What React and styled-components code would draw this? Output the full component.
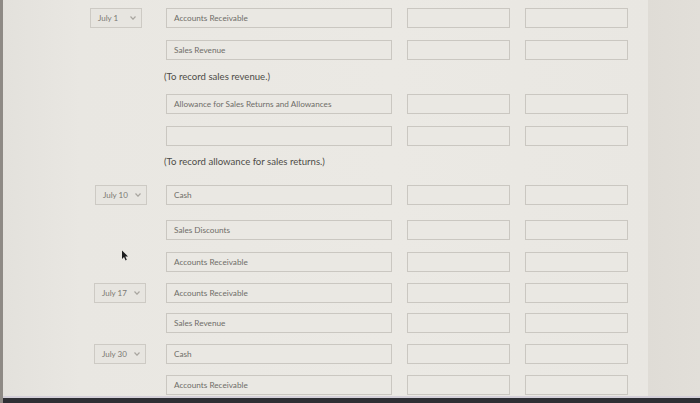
import React from "react";
import styled, { createGlobalStyle } from "styled-components";

const GlobalStyle = createGlobalStyle`
  html, body {
    margin: 0;
    padding: 0;
    background: #e6e4df;
  }
  * {
    box-sizing: border-box;
  }
`;

const Screen = styled.div`
  position: relative;
  width: 700px;
  height: 403px;
  overflow: hidden;
  display: grid;
  grid-template-columns: 645px 1fr;
  grid-template-rows: 1fr 7px;
  font-family: Lato, "Open Sans", sans-serif;
  background: #e8e6e1;
  border-left: 3px solid #8e8a85;
`;

const Sheet = styled.div`
  display: flex;
  flex-direction: column;
  padding-top: 8px;
  padding-left: 87px;
  background: linear-gradient(90deg, #e3e1dc 0%, #e9e7e2 12%, #ebe9e4 60%, #e9e7e2 100%);
  border-top: 3px solid #d6d3ce;
  margin-top: -3px;
`;

const SidePanel = styled.div`
  background: linear-gradient(90deg, #dfdcd6 0%, #e2dfd9 100%);
`;

const BottomBar = styled.div`
  grid-column: 1 / -1;
  background: #2e2f34;
  border-top: 2px solid #d3cfd8;
`;

const Row = styled.div`
  display: flex;
  align-items: center;
  height: 20px;
  margin-top: ${(p) => p.$top || 0}px;
`;

const DateSlot = styled.div`
  width: 76px;
  flex-shrink: 0;
  display: flex;
  padding-left: ${(p) => p.$shift || 0}px;
`;

const DateSelect = styled.div`
  width: 52px;
  height: 20px;
  border: 1px solid #cdcac4;
  background: #e7e5e0;
  display: flex;
  align-items: center;
  justify-content: space-between;
  padding: 0 5px 0 7px;
  font-size: 8px;
  color: #7a7873;
`;

const Chevron = styled.svg`
  width: 6px;
  height: 4px;
  stroke: #a9a6a0;
  fill: none;
  stroke-width: 1.2;
`;

const Field = styled.div`
  height: 20px;
  width: ${(p) => p.$w}px;
  margin-left: ${(p) => p.$gap || 0}px;
  flex-shrink: 0;
  border: 1px solid #cac7c1;
  background: #eae8e3;
  display: flex;
  align-items: center;
  padding-left: 7px;
  font-size: 8.2px;
  color: #6f6d68;
  white-space: nowrap;
`;

const Note = styled.div`
  margin-top: ${(p) => p.$top || 0}px;
  margin-left: 74px;
  height: 14px;
  line-height: 14px;
  font-size: 9.6px;
  color: #4e4c48;
`;

const Pointer = styled.svg`
  position: absolute;
  left: 118px;
  top: 250px;
  width: 8px;
  height: 11px;
`;

const Entry = ({ top, date, shift, account }) => (
  <Row $top={top}>
    <DateSlot $shift={shift}>
      {date && (
        <DateSelect>
          <span>{date}</span>
          <Chevron viewBox="0 0 6 4">
            <polyline points="0.5,0.5 3,3.2 5.5,0.5" />
          </Chevron>
        </DateSelect>
      )}
    </DateSlot>
    <Field $w={226}>{account}</Field>
    <Field $w={103} $gap={15} />
    <Field $w={103} $gap={15} />
  </Row>
);

const App = () => {
  return (
    <>
      <GlobalStyle />
      <Screen>
        <Sheet>
          <Entry top={0} date="July 1" shift={0} account="Accounts Receivable" />
          <Entry top={12} account="Sales Revenue" />
          <Note $top={10}>(To record sales revenue.)</Note>
          <Entry top={10} account="Allowance for Sales Returns and Allowances" />
          <Entry top={12} account="" />
          <Note $top={9}>(To record allowance for sales returns.)</Note>
          <Entry top={16} date="July 10" shift={5} account="Cash" />
          <Entry top={15} account="Sales Discounts" />
          <Entry top={12} account="Accounts Receivable" />
          <Entry top={11} date="July 17" shift={4} account="Accounts Receivable" />
          <Entry top={10} account="Sales Revenue" />
          <Entry top={11} date="July 30" shift={4} account="Cash" />
          <Entry top={11} account="Accounts Receivable" />
        </Sheet>
        <SidePanel />
        <BottomBar />
        <Pointer viewBox="0 0 8 11">
          <path d="M1 0.5 L1 9 L3 7 L4.6 10.4 L5.8 9.8 L4.3 6.6 L7 6.4 Z" fill="#1c1c1e" />
        </Pointer>
      </Screen>
    </>
  );
};

export default App;
